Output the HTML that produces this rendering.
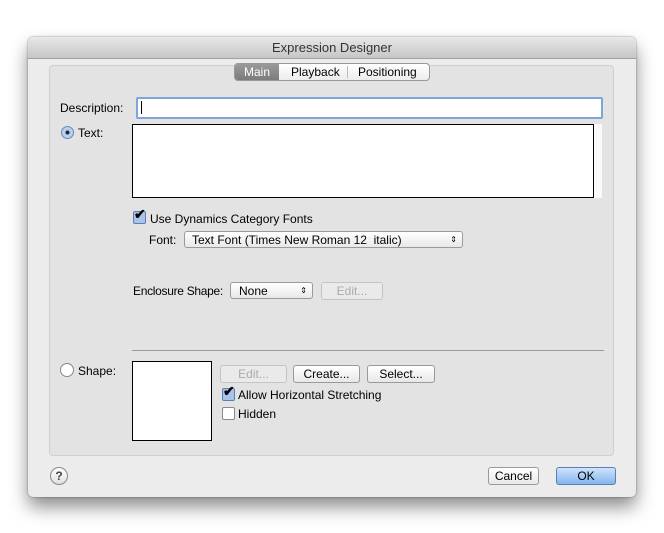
<!DOCTYPE html><html><head><style>
body{margin:0;width:664px;height:533px;background:#fff;position:relative;overflow:hidden;font-family:"Liberation Sans",sans-serif;font-size:12px;color:#000}
.a{position:absolute}
.win{left:28px;top:37px;width:608px;height:460px;background:#ececec;border-radius:5px;box-shadow:0 10px 18px rgba(0,0,0,.45),0 0 2px rgba(0,0,0,.4)}
.tb{left:28px;top:37px;width:608px;height:21px;border-radius:5px 5px 0 0;background:linear-gradient(#e8e8e8,#c6c6c6);border-bottom:1px solid #a0a0a0;text-align:center;line-height:21px;font-size:13px;color:#333}
.grp{left:49px;top:65px;width:563px;height:389px;background:#e3e3e3;border:1px solid #cfcfcf;border-radius:4px}
.btn{background:linear-gradient(#fff,#e8e8e8);border:1px solid #9a9a9a;border-radius:3px;text-align:center;line-height:16px;height:16px}
.dis{color:#aaa;border-color:#c4c4c4;background:#eaeaea}
.cb{width:11px;height:11px;border:1px solid #888;border-radius:2px;background:#fff}
</style></head><body>
<div class="a win"></div>
<div class="a tb">Expression Designer</div>
<div class="a grp"></div>
<div class="a" style="left:234px;top:63px;width:194px;height:16px;border:1px solid #999;border-radius:4px;background:linear-gradient(#fff,#ececec)"></div>
<div class="a" style="left:235px;top:64px;width:44px;height:16px;background:linear-gradient(#9a9a9a,#7c7c7c);border-radius:3px 0 0 3px;color:#fff;text-align:center;line-height:16px">Main</div>
<div class="a" style="left:291px;top:64px;line-height:16px">Playback</div>
<div class="a" style="left:347px;top:66px;width:1px;height:12px;background:#bbb"></div>
<div class="a" style="left:358px;top:64px;line-height:16px">Positioning</div>
<div class="a" style="left:60px;top:101px">Description:</div>
<div class="a" style="left:136px;top:97px;width:463px;height:18px;border:2px solid #7ea5dc;border-radius:2px;background:#fff"></div>
<div class="a" style="left:141px;top:101px;width:1px;height:13px;background:#000"></div>
<div class="a" style="left:61px;top:126px;width:11px;height:11px;border:1px solid #6a86b8;border-radius:50%;background:radial-gradient(#222 1.5px,#b9d1f0 2.5px)"></div>
<div class="a" style="left:78px;top:126px">Text:</div>
<div class="a" style="left:593px;top:124px;width:9px;height:74px;background:#fafafa"></div>
<div class="a" style="left:132px;top:124px;width:460px;height:72px;border:1px solid #000;background:#fff"></div>
<div class="a cb" style="left:133px;top:211px;background:#a9c4ea;border-color:#5d7fb0"></div>
<div class="a" style="left:134px;top:206px;font-size:14px;font-weight:bold">✔</div>
<div class="a" style="left:150px;top:212px">Use Dynamics Category Fonts</div>
<div class="a" style="left:149px;top:233px">Font:</div>
<div class="a btn" style="left:184px;top:231px;width:279px;text-align:left;padding-left:7px;box-sizing:border-box;height:17px">Text Font (Times New Roman 12&nbsp; italic)<span style="position:absolute;right:5px;font-size:8px">⇕</span></div>
<div class="a" style="left:133px;top:284px;letter-spacing:-0.3px">Enclosure Shape:</div>
<div class="a btn" style="left:230px;top:282px;width:83px;text-align:left;padding-left:8px;box-sizing:border-box;height:17px">None<span style="position:absolute;right:5px;font-size:8px">⇕</span></div>
<div class="a btn dis" style="left:321px;top:282px;width:60px">Edit...</div>
<div class="a" style="left:132px;top:350px;width:472px;height:1px;background:#999"></div>
<div class="a" style="left:60px;top:363px;width:12px;height:12px;border:1px solid #888;border-radius:50%;background:#fff"></div>
<div class="a" style="left:78px;top:364px">Shape:</div>
<div class="a" style="left:132px;top:361px;width:78px;height:78px;border:1px solid #000;background:#fff"></div>
<div class="a btn dis" style="left:220px;top:365px;width:65px">Edit...</div>
<div class="a btn" style="left:293px;top:365px;width:65px">Create...</div>
<div class="a btn" style="left:367px;top:365px;width:66px">Select...</div>
<div class="a cb" style="left:222px;top:388px;background:#a9c4ea;border-color:#5d7fb0"></div>
<div class="a" style="left:223px;top:383px;font-size:14px;font-weight:bold">✔</div>
<div class="a" style="left:238px;top:388px">Allow Horizontal Stretching</div>
<div class="a cb" style="left:222px;top:407px"></div>
<div class="a" style="left:238px;top:407px">Hidden</div>
<div class="a" style="left:50px;top:467px;width:16px;height:16px;border:1px solid #888;border-radius:50%;background:linear-gradient(#fff,#e0e0e0);text-align:center;line-height:16px;font-weight:bold;color:#444">?</div>
<div class="a btn" style="left:488px;top:467px;width:49px;height:16px">Cancel</div>
<div class="a btn" style="left:556px;top:467px;width:58px;height:16px;background:linear-gradient(#cfe3fb,#82b5ef);border-color:#5b7fb5">OK</div>
</body></html>
